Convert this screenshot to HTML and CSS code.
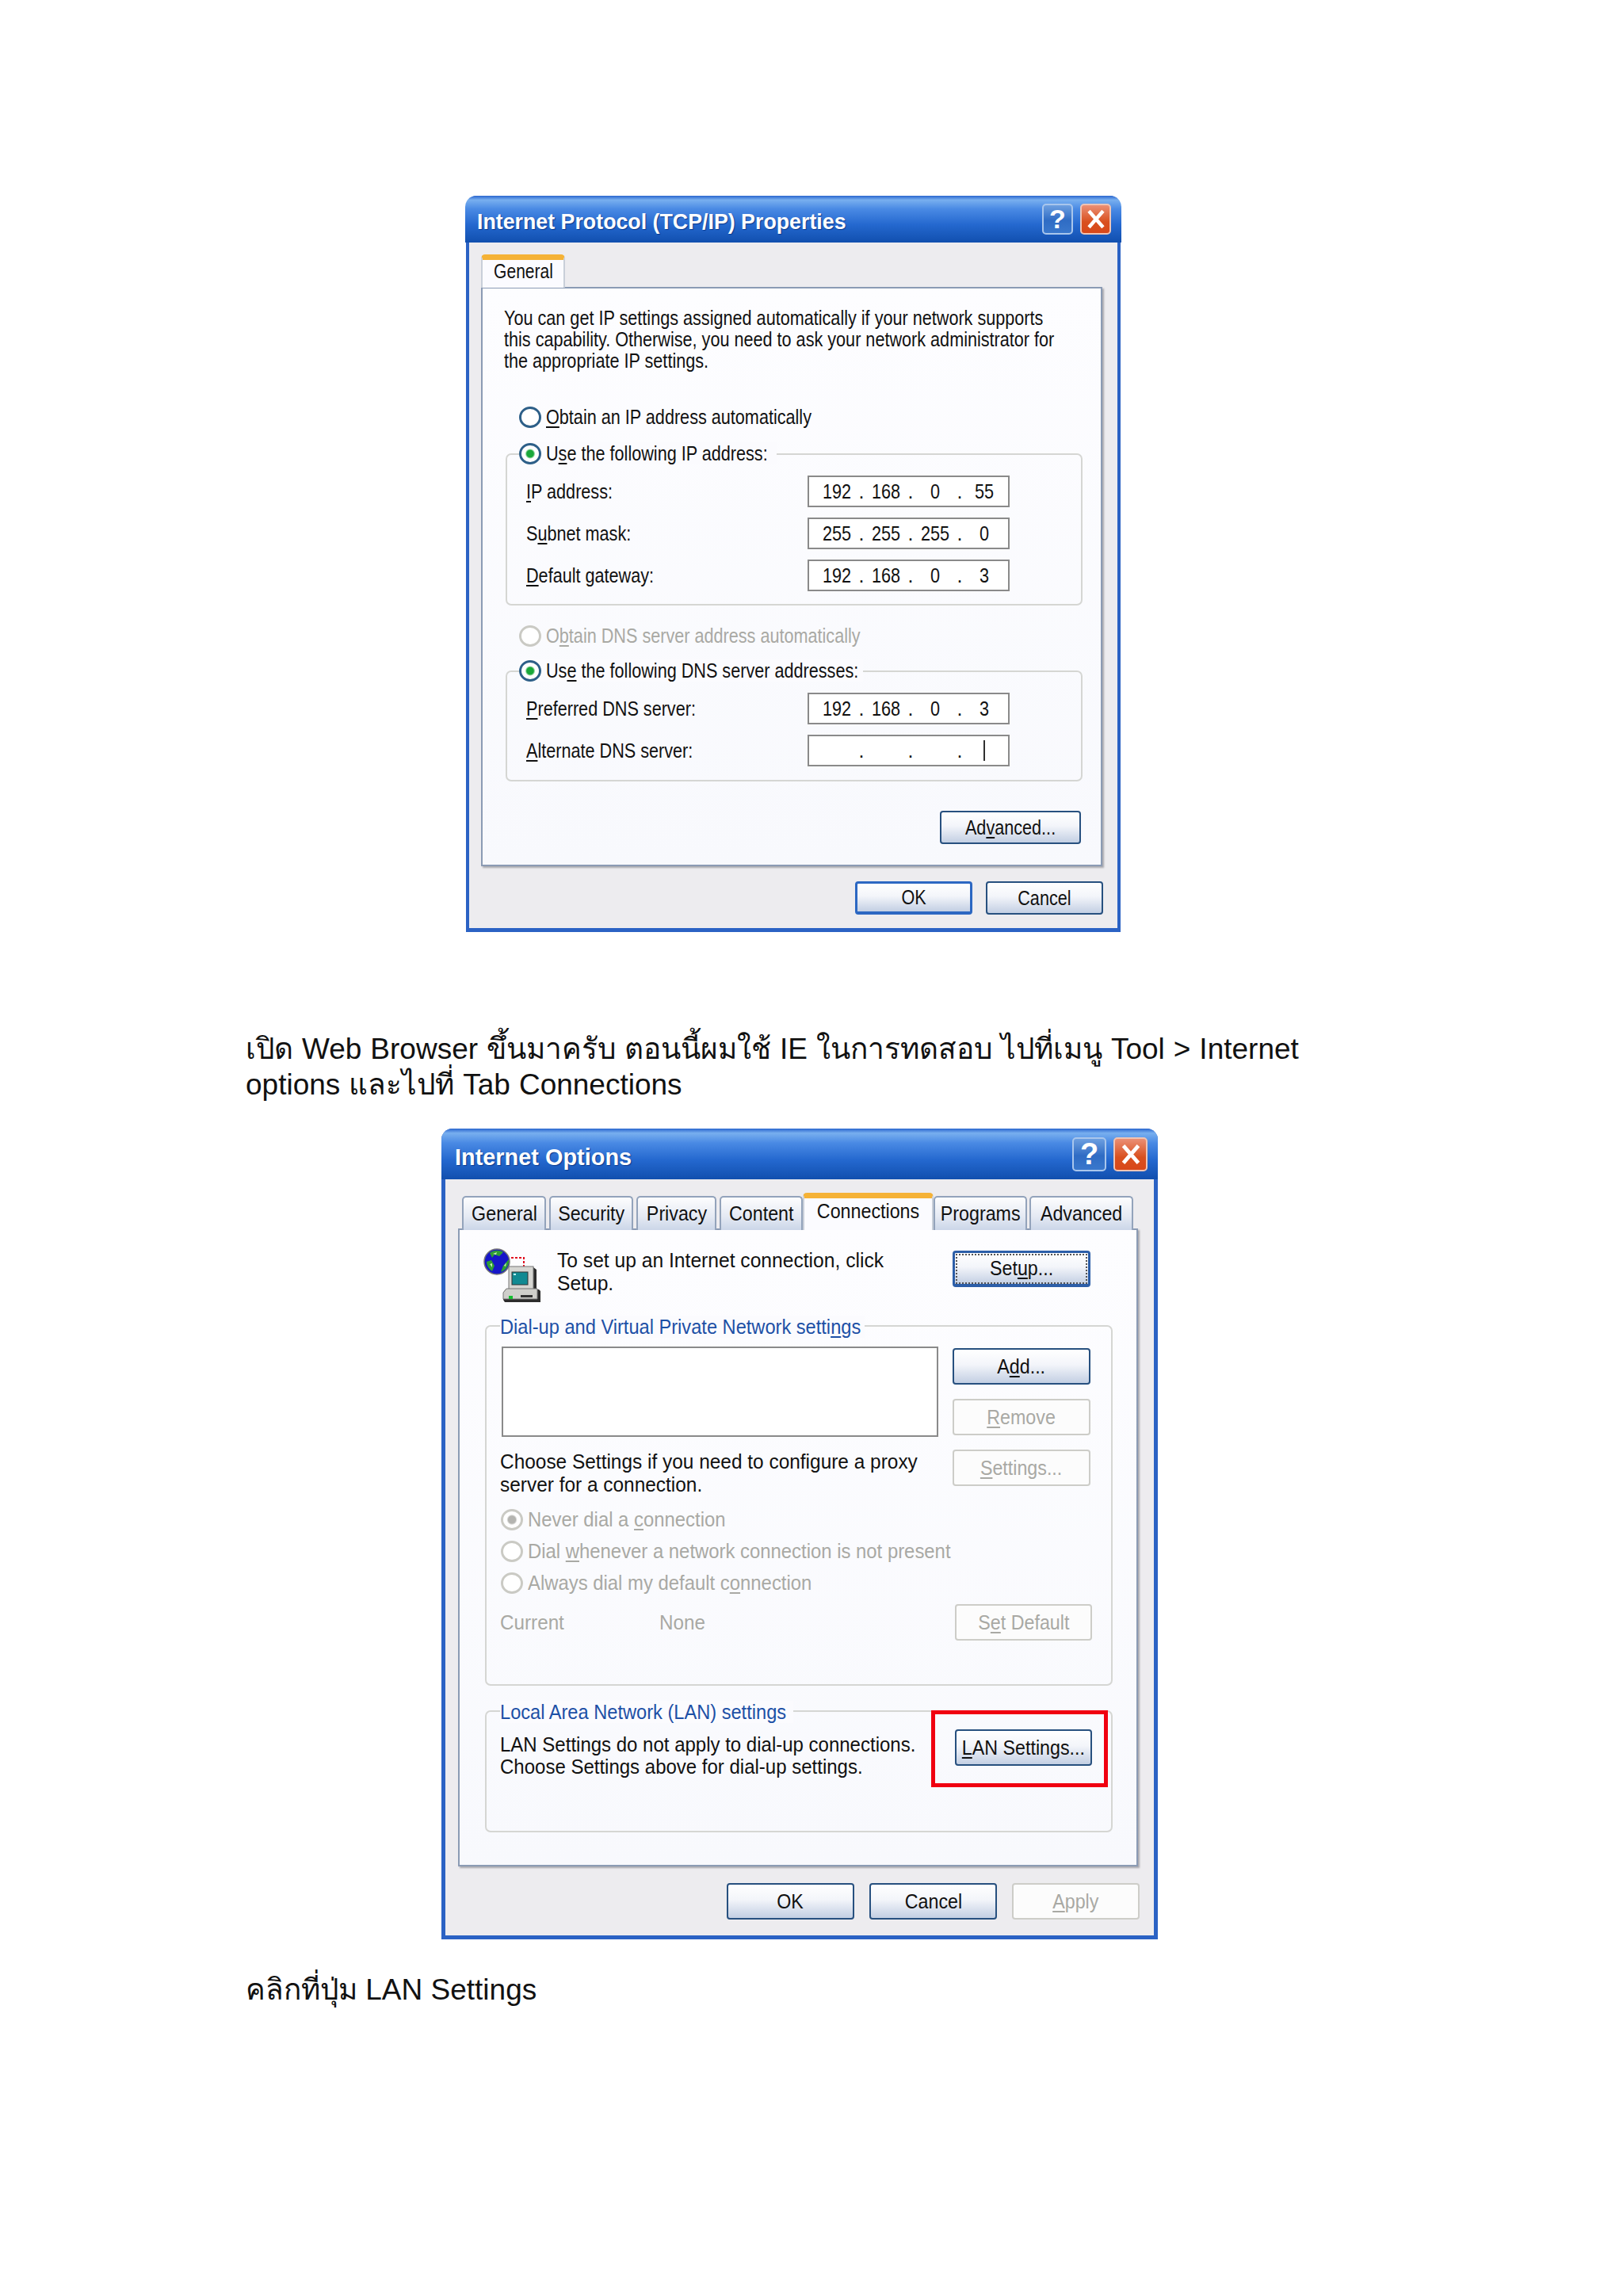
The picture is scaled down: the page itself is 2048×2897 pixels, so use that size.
FILE: index.html
```html
<!DOCTYPE html>
<html lang="th">
<head>
    <meta charset="UTF-8">
    <title>LAN Settings</title>
    <link rel="stylesheet" href="styles.css">
</head>
<body>
    <div class="dialog d1">
        <div class="titlebar">
            <span class="t title-text">Internet Protocol (TCP/IP) Properties</span>
            <span class="cap-btn help">?</span>
            <span class="cap-btn close"><svg viewBox="0 0 38 39" width="34" height="35"><path d="M9 8 L29 31 M29 8 L9 31" stroke="#fff" stroke-width="5" fill="none"/></svg></span>
        </div>
        <div class="client">
            <div class="tabs"><div class="tab active"><span class="t">General</span></div></div>
            <div class="panel">
                <p class="t intro">You can get IP settings assigned automatically if your network supports<br>this capability. Otherwise, you need to ask your network administrator for<br>the appropriate IP settings.</p>
                <div class="radio-row first"><span class="radio"></span><span class="t"><u>O</u>btain an IP address automatically</span></div>
                <div class="group ip-group">
                    <div class="radio-row legend legend-ip"><span class="radio on"></span><span class="t">U<u>s</u>e the following IP address:</span></div>
                    <div class="ip-row"><span class="t"><u>I</u>P address:</span><div class="ip-box"><span class="oct">192</span><span class="dot">.</span><span class="oct">168</span><span class="dot">.</span><span class="oct">0</span><span class="dot">.</span><span class="oct">55</span></div></div>
                    <div class="ip-row"><span class="t">S<u>u</u>bnet mask:</span><div class="ip-box"><span class="oct">255</span><span class="dot">.</span><span class="oct">255</span><span class="dot">.</span><span class="oct">255</span><span class="dot">.</span><span class="oct">0</span></div></div>
                    <div class="ip-row"><span class="t"><u>D</u>efault gateway:</span><div class="ip-box"><span class="oct">192</span><span class="dot">.</span><span class="oct">168</span><span class="dot">.</span><span class="oct">0</span><span class="dot">.</span><span class="oct">3</span></div></div>
                </div>
                <div class="radio-row dns-auto disabled"><span class="radio"></span><span class="t">O<u>b</u>tain DNS server address automatically</span></div>
                <div class="group dns-group">
                    <div class="radio-row legend legend-dns"><span class="radio on"></span><span class="t">Us<u>e</u> the following DNS server addresses:</span></div>
                    <div class="ip-row"><span class="t"><u>P</u>referred DNS server:</span><div class="ip-box"><span class="oct">192</span><span class="dot">.</span><span class="oct">168</span><span class="dot">.</span><span class="oct">0</span><span class="dot">.</span><span class="oct">3</span></div></div>
                    <div class="ip-row"><span class="t"><u>A</u>lternate DNS server:</span><div class="ip-box"><span class="oct"></span><span class="dot">.</span><span class="oct"></span><span class="dot">.</span><span class="oct"></span><span class="dot">.</span><span class="oct"><i class="caret"></i></span></div></div>
                </div>
                <div class="advanced-row"><div class="btn advanced"><span class="t">Ad<u>v</u>anced...</span></div></div>
            </div>
            <div class="footer-btns">
                <div class="btn default"><span class="t">OK</span></div>
                <div class="btn"><span class="t">Cancel</span></div>
            </div>
        </div>
    </div>

    <p class="note note-top">เปิด Web Browser ขึ้นมาครับ ตอนนี้ผมใช้ IE ในการทดสอบ ไปที่เมนู Tool &gt; Internet<br>options และไปที่ Tab Connections</p>

    <div class="dialog d2">
        <div class="titlebar">
            <span class="t title-text">Internet Options</span>
            <span class="cap-btn help">?</span>
            <span class="cap-btn close"><svg viewBox="0 0 38 39" width="36" height="39"><path d="M9 8 L29 31 M29 8 L9 31" stroke="#fff" stroke-width="5" fill="none"/></svg></span>
        </div>
        <div class="client">
            <div class="tabs">
                <div class="tab tab-general"><span class="t">General</span></div>
                <div class="tab tab-security"><span class="t">Security</span></div>
                <div class="tab tab-privacy"><span class="t">Privacy</span></div>
                <div class="tab tab-content"><span class="t">Content</span></div>
                <div class="tab active tab-connections"><span class="t">Connections</span></div>
                <div class="tab tab-programs"><span class="t">Programs</span></div>
                <div class="tab tab-advanced"><span class="t">Advanced</span></div>
            </div>
            <div class="panel">
                <div class="setup-row">
                    <svg class="net-icon" viewBox="0 0 72 70" width="72" height="70">
                        <path d="M35 12 H51 V23" fill="none" stroke="#e01020" stroke-width="2" stroke-dasharray="3 2"/>
                        <path d="M33 24 H63 L67 27 V54 H33 Z" fill="#2c2c2c"/>
                        <rect x="32" y="23" width="31" height="29" fill="#d6d6d2" stroke="#777"/>
                        <rect x="36" y="30" width="20" height="16" fill="#118a92" stroke="#333"/>
                        <rect x="38" y="32" width="3" height="2" fill="#bff"/>
                        <path d="M28 52 H70 L72 54 V68 H27 L25 65 V56 Z" fill="#2c2c2c"/>
                        <path d="M25 56 L29 51 H68 V64 H25 Z" fill="#cfcfcb" stroke="#777"/>
                        <rect x="32" y="60" width="5" height="4" fill="#14c030"/>
                        <rect x="47" y="59" width="15" height="3" fill="#333"/>
                        <circle cx="17" cy="17" r="16" fill="#1616c8" stroke="#777" stroke-width="1.5"/>
                        <path d="M8 6 C13 2 20 2 25 5 L20 10 L14 8 L11 12 Z M4 17 L10 15 L14 22 L11 29 C7 26 4 22 4 17 Z M22 30 L25 22 L32 14 C33 20 29 28 22 30 Z" fill="#2f9e35"/>
                        <path d="M12 7 L17 5 L16 8 Z M8 20 L11 19 L11 24 Z M26 22 L29 18 L28 23 Z" fill="#c8f0b0"/>
                    </svg>
                    <p class="t setup-text">To set up an Internet connection, click<br>Setup.</p>
                    <div class="btn btn-side focused"><span class="t">Set<u>u</u>p...</span></div>
                </div>
                <div class="group dial-group">
                    <div class="legend legend-dial"><span class="t">Dial-up and Virtual Private Network setti<u>n</u>gs</span></div>
                    <div class="dial-cols">
                        <div class="dial-left">
                            <div class="listbox"></div>
                            <p class="t choose-text">Choose Settings if you need to configure a proxy<br>server for a connection.</p>
                        </div>
                        <div class="dial-right">
                            <div class="btn btn-side"><span class="t">A<u>d</u>d...</span></div>
                            <div class="btn btn-side off"><span class="t"><u>R</u>emove</span></div>
                            <div class="btn btn-side off"><span class="t"><u>S</u>ettings...</span></div>
                        </div>
                    </div>
                    <div class="radio-row dial-radio disabled"><span class="radio on"></span><span class="t">Never dial a <u>c</u>onnection</span></div>
                    <div class="radio-row dial-radio disabled"><span class="radio"></span><span class="t">Dial <u>w</u>henever a network connection is not present</span></div>
                    <div class="radio-row dial-radio disabled"><span class="radio"></span><span class="t">Always dial my default c<u>o</u>nnection</span></div>
                    <div class="current-row disabled">
                        <span class="t current-label">Current</span>
                        <span class="t current-value">None</span>
                        <div class="btn btn-wide off"><span class="t">S<u>e</u>t Default</span></div>
                    </div>
                </div>
                <div class="group lan-group">
                    <div class="legend legend-lan"><span class="t">Local Area Network (LAN) settings</span></div>
                    <div class="lan-row">
                        <p class="t lan-text">LAN Settings do not apply to dial-up connections.<br>Choose Settings above for dial-up settings.</p>
                        <div class="btn btn-wide"><span class="t"><u>L</u>AN Settings...</span></div>
                    </div>
                    <div class="red-mark"></div>
                </div>
            </div>
            <div class="footer-btns">
                <div class="btn"><span class="t">OK</span></div>
                <div class="btn"><span class="t">Cancel</span></div>
                <div class="btn off"><span class="t"><u>A</u>pply</span></div>
            </div>
        </div>
    </div>

    <p class="note note-bottom">คลิกที่ปุ่ม LAN Settings</p>
</body>
</html>
```

FILE: styles.css
```css
* {
    box-sizing: border-box;
}
body {
    margin: 0;
    height: 2897px;
    padding-top: 247px;
    background: #fff;
    color: #111;
    font-family: "Liberation Sans", "Noto Sans", "DejaVu Sans", sans-serif;
    overflow: hidden;
}
p {
    margin: 0;
}

/* page text */
.note {
    margin-left: 310px;
    font-size: 37px;
    line-height: 45px;
    white-space: nowrap;
}
.note-top {
    margin-top: 125px;
    word-spacing: .7px;
}
.note-bottom {
    margin-top: 41px;
}

/* the screenshots are squeezed sideways, so text gets scaled on x only */
.t {
    display: inline-block;
    white-space: nowrap;
    transform: scaleX(var(--sx));
    transform-origin: left center;
}
u {
    text-underline-offset: 3px;
    text-decoration-thickness: 2px;
}

/* window frame */
.dialog {
    font-size: 25px;
    line-height: 27px;
    background: #2b62c4;
    border-radius: 14px 14px 0 0;
}
.d1 {
    --sx: .865;
    width: 826px;
    height: 929px;
    margin-left: 588px;
    padding: 0 4px 5px;
}
.d2 {
    --sx: .97;
    width: 904px;
    height: 1023px;
    margin-top: 33px;
    margin-left: 557px;
    padding: 0 5px 5px;
}
.titlebar {
    display: flex;
    align-items: center;
    margin: 0 -5px;
    padding: 0 13px 0 15px;
    background: linear-gradient(180deg, #2a66cf 0, #78afef 9%, #4a8ae4 28%, #2468cf 62%, #114fae 100%);
    border-radius: 14px 14px 0 0;
}
.d1 .titlebar {
    height: 59px;
}
.d2 .titlebar {
    height: 64px;
    padding-left: 17px;
}
.title-text {
    flex: 1;
    margin-top: 6px;
    color: #fff;
    font-weight: bold;
    text-shadow: 1px 1px 1px #0c3a8c;
}
.d1 .title-text {
    font-size: 28px;
    --sx: .956;
}
.d2 .title-text {
    font-size: 30px;
    --sx: .963;
}
.cap-btn {
    display: flex;
    align-items: center;
    justify-content: center;
    width: 39px;
    height: 39px;
    border: 2px solid #a9c6ec;
    border-radius: 5px;
    color: #fff;
    font-size: 34px;
    font-weight: bold;
}
.d2 .cap-btn {
    width: 43px;
    height: 43px;
    font-size: 38px;
}
.help {
    margin-right: 9px;
    background: linear-gradient(180deg, #6d9fe0, #2f6cc4 55%, #3a78cc);
}
.close {
    background: linear-gradient(180deg, #eb8f74, #d9501f 60%, #d8481a);
    border-color: #efc4b4;
}

.client {
    background: #edecef;
}
.d1 .client {
    height: 865px;
    padding: 15px 18px 0 15px;
}
.d2 .client {
    height: 954px;
    padding: 17px 18px 0 16px;
}

/* tabs */
.tabs {
    position: relative;
    z-index: 1;
    display: flex;
    align-items: flex-end;
    gap: 4px;
}
.d1 .tabs {
    margin-bottom: -1px;
}
.d2 .tabs {
    height: 47px;
    margin-bottom: -2px;
    padding-left: 5px;
}
.tab {
    --sx: .93;
    display: flex;
    align-items: center;
    justify-content: center;
    height: 43px;
    border: 2px solid #93a3bb;
    border-bottom: none;
    border-radius: 5px 5px 0 0;
    background: linear-gradient(180deg, #fdfdfe, #e4e9f3 60%, #cbd6e8);
    white-space: nowrap;
}
.tab .t {
    transform-origin: center;
}
.tab.active {
    height: 47px;
    border-top: 7px solid #f5b236;
    background: #fbfbff;
    border-left-color: #c9cfd9;
    border-right-color: #c9cfd9;
}
.d1 .tab.active {
    --sx: .84;
    width: 106px;
    height: 42px;
}
.d1 .tab .t {
    margin-bottom: 7px;
}
.tab-general { width: 106px; }
.tab-security { width: 106px; }
.tab-privacy { width: 101px; }
.tab-content { width: 105px; margin-right: -4px; }
.tab-connections { width: 165px; margin-right: -4px; }
.tab-connections .t { margin-bottom: 8px; }
.tab-programs { width: 118px; }
.tab-advanced { width: 131px; margin-left: -1px; }

.panel {
    border: 2px solid #8b9bb4;
    background: linear-gradient(180deg, #fdfdff, #f8f9fd);
    box-shadow: 2px 2px 2px #a8a8ae;
}
.d1 .panel {
    width: 784px;
    height: 731px;
    padding: 24px 0 0 29px;
}
.d2 .panel {
    width: 858px;
    height: 805px;
}
.intro {
    margin-left: -2px;
}

/* group boxes */
.group {
    position: relative;
    border: 2px solid #d5d6d3;
    border-radius: 7px;
}
.legend {
    position: relative;
    background: #fbfbfe;
    margin-top: -16px;
}
.ip-group {
    width: 728px;
    height: 192px;
    margin-top: 32px;
}
.dns-group {
    width: 728px;
    height: 140px;
    margin-top: 30px;
}
.legend-ip {
    width: 325px;
    margin-left: 15px;
}
.legend-dns {
    width: 434px;
    margin-left: 15px;
}
.radio-row {
    display: flex;
    align-items: center;
    gap: 6px;
    height: 28px;
}
.radio-row.first {
    margin-top: 43px;
    margin-left: 17px;
}
.dns-auto {
    margin-top: 24px;
    margin-left: 17px;
}
.radio {
    flex: none;
    width: 28px;
    height: 27px;
    border: 3px solid #2d5f88;
    border-radius: 50%;
    background: #fff;
}
.radio.on {
    background: radial-gradient(circle, #1aa83a 0, #1aa83a 28%, #fff 42%);
}
.disabled {
    color: #a9a9a4;
}
.disabled .radio {
    border-color: #cacac4;
}
.disabled .radio.on {
    background: radial-gradient(circle, #b4b4b0 0, #b4b4b0 30%, #fff 44%);
}

/* address rows */
.ip-row {
    display: grid;
    grid-template-columns: 355px 255px;
    align-items: center;
    height: 40px;
    margin-top: 13px;
    padding-left: 24px;
}
.legend + .ip-row {
    margin-top: 14px;
}
.ip-box {
    display: flex;
    align-items: center;
    height: 40px;
    padding-left: 10px;
    border: 2px solid #8a8a8a;
    background: #fff;
}
.oct {
    display: flex;
    align-items: center;
    justify-content: center;
    width: 50px;
    height: 100%;
    transform: scaleX(var(--sx));
}
.dot {
    width: 12px;
    text-align: center;
}
.caret {
    width: 2px;
    height: 26px;
    background: #111;
}

/* buttons */
.btn {
    display: flex;
    align-items: center;
    justify-content: center;
    flex: none;
    width: 148px;
    height: 42px;
    border: 2px solid #27507f;
    border-radius: 4px;
    background: linear-gradient(180deg, #fff, #f3f5fa 45%, #c3cfe3);
}
.btn .t {
    transform-origin: center;
}
.btn.default {
    border: 3px solid #2c67c2;
    border-bottom-width: 4px;
}
.btn.off {
    border-color: #cdcdc8;
    background: #fcfcfc;
    color: #a9a9a4;
}
.advanced-row {
    display: flex;
    justify-content: flex-end;
    width: 726px;
    margin-top: 37px;
}
.advanced {
    width: 178px;
}
.footer-btns {
    display: flex;
    justify-content: flex-end;
    gap: 17px;
    margin-top: 19px;
}
.d2 .footer-btns {
    margin-top: 21px;
}
.d2 .footer-btns .btn {
    width: 161px;
    height: 46px;
    margin-left: 2px;
}
.d2 .btn .t {
    --sx: .93;
}

/* connections tab */
.setup-row {
    --sx: .985;
    display: flex;
    align-items: flex-start;
    height: 70px;
    margin: 23px 58px 0 30px;
}
.net-icon {
    flex: none;
    margin-right: 21px;
}
.setup-text {
    margin-top: 1px;
    line-height: 29px;
}
.btn-side {
    width: 174px;
    height: 46px;
}
.setup-row .btn {
    margin-top: 3px;
    margin-left: auto;
}
.focused {
    border: 3px solid #2c5ea8;
    border-bottom-width: 4px;
    outline: 2px dotted #555;
    outline-offset: -6px;
}
.dial-group {
    width: 792px;
    height: 455px;
    margin: 27px 0 0 32px;
}
.lan-group {
    width: 792px;
    height: 154px;
    margin: 31px 0 0 32px;
}
.legend-dial, .legend-lan {
    --sx: .945;
    height: 28px;
    line-height: 28px;
    margin-top: -14px;
    margin-left: 17px;
    color: #1d50a6;
}
.legend-dial {
    width: 460px;
}
.legend-lan {
    width: 370px;
}
.dial-cols {
    display: grid;
    grid-template-columns: 551px 174px;
    gap: 18px;
    margin: 11px 0 0 19px;
}
.dial-right {
    display: flex;
    flex-direction: column;
    gap: 18px;
    padding-top: 2px;
}
.listbox {
    height: 114px;
    border: 2px solid #8a8a8a;
    background: #fff;
}
.choose-text {
    margin: 17px 0 0 -2px;
    line-height: 29px;
    --sx: .977;
}
.dial-radio {
    --sx: .955;
    height: 40px;
    margin-left: 18px;
}
.dial-cols + .dial-radio {
    margin-top: 9px;
}
.current-row {
    display: flex;
    align-items: center;
    height: 46px;
    margin: 7px 0 0 17px;
}
.current-label {
    width: 201px;
}
.current-value {
    width: 373px;
}
.btn-wide {
    width: 173px;
    height: 46px;
}
.lan-row {
    display: flex;
    align-items: flex-start;
    margin: 8px 24px 0 17px;
}
.lan-text {
    --sx: .96;
    flex: none;
    width: 574px;
    margin-top: 5px;
    line-height: 28px;
}
.lan-row .btn {
    margin-left: auto;
}
/* red box drawn over the screenshot */
.red-mark {
    position: absolute;
    left: 561px;
    top: -2px;
    width: 223px;
    height: 97px;
    border: 5px solid #f00010;
}
```
